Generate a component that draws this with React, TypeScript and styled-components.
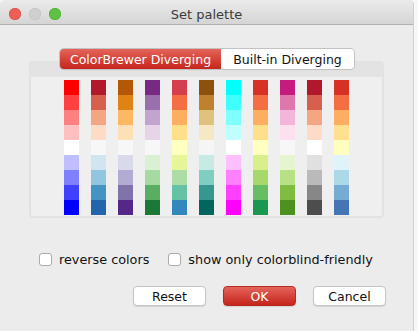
import React from 'react';
import styled, { createGlobalStyle } from 'styled-components';

const palettes: string[][] = [
  ['#ff0000', '#ff4040', '#ff8080', '#ffbfbf', '#ffffff', '#bfbfff', '#8080ff', '#4040ff', '#0000ff'],
  ['#b2182b', '#d6604d', '#f4a582', '#fddbc7', '#f7f7f7', '#d1e5f0', '#92c5de', '#4393c3', '#2166ac'],
  ['#b35806', '#e08214', '#fdb863', '#fee0b6', '#f7f7f7', '#d8daeb', '#b2abd2', '#8073ac', '#542788'],
  ['#762a83', '#9970ab', '#c2a5cf', '#e7d4e8', '#f7f7f7', '#d9f0d3', '#a6dba0', '#5aae61', '#1b7837'],
  ['#d53e4f', '#f46d43', '#fdae61', '#fee08b', '#ffffbf', '#e6f598', '#abdda4', '#66c2a5', '#3288bd'],
  ['#8c510a', '#bf812d', '#dfc27d', '#f6e8c3', '#f5f5f5', '#c7eae5', '#80cdc1', '#35978f', '#01665e'],
  ['#00ffff', '#40ffff', '#80ffff', '#bfffff', '#ffffff', '#ffbfff', '#ff80ff', '#ff40ff', '#ff00ff'],
  ['#d73027', '#f46d43', '#fdae61', '#fee08b', '#ffffbf', '#d9ef8b', '#a6d96a', '#66bd63', '#1a9850'],
  ['#c51b7d', '#de77ae', '#f1b6da', '#fde0ef', '#f7f7f7', '#e6f5d0', '#b8e186', '#7fbc41', '#4d9221'],
  ['#b2182b', '#d6604d', '#f4a582', '#fddbc7', '#ffffff', '#e0e0e0', '#bababa', '#878787', '#4d4d4d'],
  ['#d73027', '#f46d43', '#fdae61', '#fee090', '#ffffbf', '#e0f3f8', '#abd9e9', '#74add1', '#4575b4']
];

function App() {
  const [tab, setTab] = React.useState(0);
  const [reverse, setReverse] = React.useState(false);
  const [blindOnly, setBlindOnly] = React.useState(false);

  return (
    <>
      <GlobalStyle />
      <Window>
        <TitleBar>
          <Lights>
            <Light color="#ed5f56" edge="#d84a41" />
            <Light color="#cfcfcf" edge="#bdbdbd" />
            <Light color="#5dc242" edge="#4aa732" />
          </Lights>
          <Title>Set palette</Title>
          <span />
        </TitleBar>
        <Body>
          <TabBar>
            <Tab active={tab === 0} onClick={() => setTab(0)}>
              ColorBrewer Diverging
            </Tab>
            <Tab active={tab === 1} onClick={() => setTab(1)}>
              Built-in Diverging
            </Tab>
          </TabBar>
          <Panel>
            <PanelHeader />
            <Swatches>
              {palettes.map((colors, i) => (
                <Column key={i}>
                  {colors.map((c, j) => (
                    <Cell key={j} color={c} />
                  ))}
                </Column>
              ))}
            </Swatches>
          </Panel>
          <Options>
            <Check onClick={() => setReverse(!reverse)}>
              <Box checked={reverse} />
              reverse colors
            </Check>
            <Check onClick={() => setBlindOnly(!blindOnly)}>
              <Box checked={blindOnly} />
              show only colorblind-friendly
            </Check>
          </Options>
          <Buttons>
            <Button>Reset</Button>
            <Button primary>OK</Button>
            <Button>Cancel</Button>
          </Buttons>
        </Body>
      </Window>
    </>
  );
}

const GlobalStyle = createGlobalStyle`
  html, body {
    margin: 0;
    background: #f7f7f7;
  }
  body {
    font-family: "DejaVu Sans", "Liberation Sans", sans-serif;
  }
`;

const Window = styled.div`
  width: 414px;
  height: 331px;
  background: #ececec;
  border-right: 1px solid #cfcfcf;
  border-radius: 5px 5px 0 0;
  overflow: hidden;
  box-sizing: border-box;
`;

const TitleBar = styled.div`
  height: 24px;
  display: grid;
  grid-template-columns: 1fr auto 1fr;
  align-items: center;
  background: linear-gradient(#ebebeb, #d5d5d5);
  border-bottom: 1px solid #b1b1b1;
  padding: 0 9px;
`;

const Lights = styled.div`
  display: flex;
  gap: 8px;
  margin-top: 4px;
`;

const Light = styled.span<{ color: string; edge: string }>`
  width: 12px;
  height: 12px;
  border-radius: 50%;
  background: ${(p) => p.color};
  box-shadow: inset 0 0 0 0.5px ${(p) => p.edge};
`;

const Title = styled.div`
  font-size: 13px;
  color: #3a3a3a;
  margin-top: 4px;
`;

const Body = styled.div`
  padding: 24px 27px 0 29px;
`;

const TabBar = styled.div`
  display: flex;
  width: 294px;
  height: 20px;
  margin: 0 0 -8px 31px;
  position: relative;
  z-index: 1;
  border-radius: 4px;
  overflow: hidden;
  box-shadow: 0 0 0 1px #c2c2c2, 0 1px 1px rgba(0, 0, 0, 0.12);
`;

const Tab = styled.div<{ active: boolean }>`
  display: flex;
  align-items: center;
  justify-content: center;
  font-size: 12.5px;
  cursor: pointer;
  color: ${(p) => (p.active ? '#ffffff' : '#111111')};
  background: ${(p) =>
    p.active ? 'linear-gradient(#e4645a, #c5251c)' : '#ffffff'};
  flex: ${(p) => (p.active ? '0 0 161px' : '1')};
`;

const Panel = styled.div`
  width: 355px;
  height: 157px;
  box-sizing: border-box;
  border: 2px solid #e2e2e2;
  border-radius: 4px;
  background: #efefef;
  display: flex;
  flex-direction: column;
`;

const PanelHeader = styled.div`
  height: 14px;
  background: #e3e3e3;
`;

const Swatches = styled.div`
  display: flex;
  justify-content: center;
  gap: 12px;
  padding-top: 3px;
`;

const Column = styled.div`
  display: flex;
  flex-direction: column;
`;

const Cell = styled.div<{ color: string }>`
  width: 15px;
  height: 15px;
  background: ${(p) => p.color};
`;

const Options = styled.div`
  display: flex;
  gap: 19px;
  margin: 34px 0 0 10px;
`;

const Check = styled.label`
  display: flex;
  align-items: center;
  gap: 7px;
  font-size: 12.8px;
  color: #111111;
  cursor: pointer;
`;

const Box = styled.span<{ checked: boolean }>`
  width: 13px;
  height: 13px;
  box-sizing: border-box;
  border: 1px solid #ababab;
  border-radius: 3px;
  background: ${(p) => (p.checked ? '#3b82f6' : '#ffffff')};
`;

const Buttons = styled.div`
  display: flex;
  justify-content: flex-end;
  gap: 17px;
  margin-top: 19px;
`;

const Button = styled.button<{ primary?: boolean }>`
  width: 73px;
  height: 20px;
  padding: 0;
  font-family: inherit;
  font-size: 12.5px;
  border-radius: 4px;
  border: 1px solid ${(p) => (p.primary ? '#b8291f' : '#c4c4c4')};
  color: ${(p) => (p.primary ? '#ffffff' : '#111111')};
  background: ${(p) =>
    p.primary ? 'linear-gradient(#e4645a, #c5251c)' : '#ffffff'};
  box-shadow: 0 1px 1px rgba(0, 0, 0, 0.1);
`;

export default App;
